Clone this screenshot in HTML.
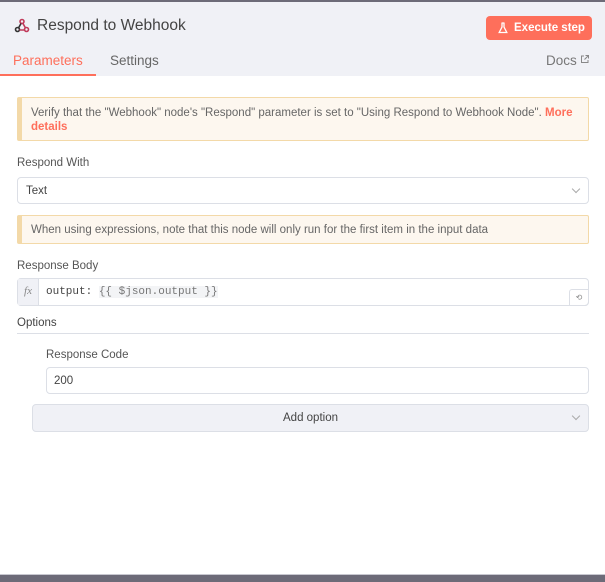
<!DOCTYPE html>
<html><head><meta charset="utf-8"><style>
*{box-sizing:border-box;margin:0;padding:0}
body{width:605px;height:582px;overflow:hidden;background:#fff;font-family:"Liberation Sans",sans-serif;position:relative;color:#555}
.top{position:absolute;left:0;top:0;width:605px;height:2px;background:#6d6b78}
.hdr{position:absolute;left:0;top:2px;width:605px;height:74px;background:#f0f1f6}
.title{position:absolute;left:37px;top:17px;font-size:15.5px;color:#444}
.btn{position:absolute;left:486px;top:16px;width:106px;height:24px;background:#fe6f5b;border-radius:4px;color:#fff;font-size:11.5px;font-weight:bold;line-height:24px;padding-left:28px}
.tab{position:absolute;top:53px;font-size:13.5px}
.abs{position:absolute}
.note{position:absolute;left:17px;width:572px;background:#fdf7ef;border:1px solid #f3d9a8;border-left:5px solid #f3d9a8;font-size:11.5px;color:#666;border-radius:2px}
.lbl{position:absolute;font-size:11.5px;color:#555}
.inp{position:absolute;border:1px solid #dcdfe6;border-radius:4px;background:#fff;font-size:11.5px;color:#444}
.chev{position:absolute;right:9px;top:8px;width:6px;height:6px;border-right:1px solid #aaa;border-bottom:1px solid #aaa;transform:rotate(45deg)}
</style></head><body>
<div class="top"></div>
<div class="hdr"></div>
<svg class="abs" style="left:14px;top:18px" width="16" height="15" viewBox="0 0 16 15" fill="none" stroke="#c03a5a" stroke-width="1.6"><circle cx="8" cy="3.5" r="2"/><path d="M7 5.5L4.2 10.5" stroke="#333"/><circle cx="3.5" cy="11.5" r="2" stroke="#333"/><circle cx="12.5" cy="11.5" r="2"/><path d="M9 5.5l2.5 4.5M5.5 12h5"/></svg>
<div class="title">Respond to Webhook</div>
<div class="btn">Execute step</div>
<svg class="abs" style="left:498px;top:22px" width="10" height="12" viewBox="0 0 10 12" fill="none" stroke="#fff" stroke-width="1.3"><path d="M3.5 1h3M4 1v4L1.2 10.5h7.6L6 5V1"/></svg>
<div class="tab" style="left:13px;color:#fe6f5b">Parameters</div>
<div class="abs" style="left:0;top:74px;width:96px;height:2px;background:#fe6f5b"></div>
<div class="tab" style="left:110px;color:#666">Settings</div>
<div class="tab" style="left:546px;color:#777">Docs</div>
<svg class="abs" style="left:580px;top:54px" width="10" height="10" viewBox="0 0 10 10" fill="none" stroke="#888" stroke-width="1"><path d="M4 2H1.5v6.5H8V6M5.5 1.5H8.5V4.5M8.5 1.5L4.5 5.5"/></svg>

<div class="note" style="top:97px;height:44px;padding:8px 8px 0 9px;line-height:14px">Verify that the "Webhook" node's "Respond" parameter is set to "Using Respond to Webhook Node". <b style="color:#fe6f5b">More details</b></div>

<div class="lbl" style="left:17px;top:157px">Respond With</div>
<div class="inp" style="left:17px;top:177px;width:572px;height:27px;padding:7px 8px">Text<div class="chev"></div></div>

<div class="note" style="top:215px;height:29px;padding:8px 9px">When using expressions, note that this node will only run for the first item in the input data</div>

<div class="lbl" style="left:17px;top:260px">Response Body</div>
<div class="inp" style="left:17px;top:278px;width:572px;height:28px">
<div class="abs" style="left:0;top:0;width:21px;height:26px;background:#f0f1f6;border-right:1px solid #dcdfe6;font-family:'Liberation Serif',serif;font-style:italic;color:#888;font-size:11px;text-align:center;line-height:25px">fx</div>
<div class="abs" style="left:28px;top:7px;font-family:'Liberation Mono',monospace;font-size:11px;color:#444">output: <span style="background:#f3f4f6;color:#777">{{ $json.output }}</span></div>
<div class="abs" style="right:-1px;bottom:-1px;width:20px;height:17px;border:1px solid #dcdfe6;border-radius:3px 0 4px 0;font-size:8px;color:#888;text-align:center;line-height:15px">⟲</div>
</div>

<div class="lbl" style="left:17px;top:317px;color:#444">Options</div>
<div class="abs" style="left:17px;top:333px;width:572px;height:1px;background:#dcdfe6"></div>
<div class="lbl" style="left:46px;top:349px">Response Code</div>
<div class="inp" style="left:46px;top:367px;width:543px;height:27px;padding:7px 7px">200</div>
<div class="inp" style="left:32px;top:404px;width:557px;height:28px;background:#f0f1f6;text-align:center;line-height:27px">Add option<div class="chev"></div></div>

<div class="abs" style="left:0;top:575px;width:605px;height:7px;background:#6d6b78"></div>
<div class="abs" style="left:0;top:574px;width:605px;height:1px;background:#c8c8d0"></div>
</body></html>
